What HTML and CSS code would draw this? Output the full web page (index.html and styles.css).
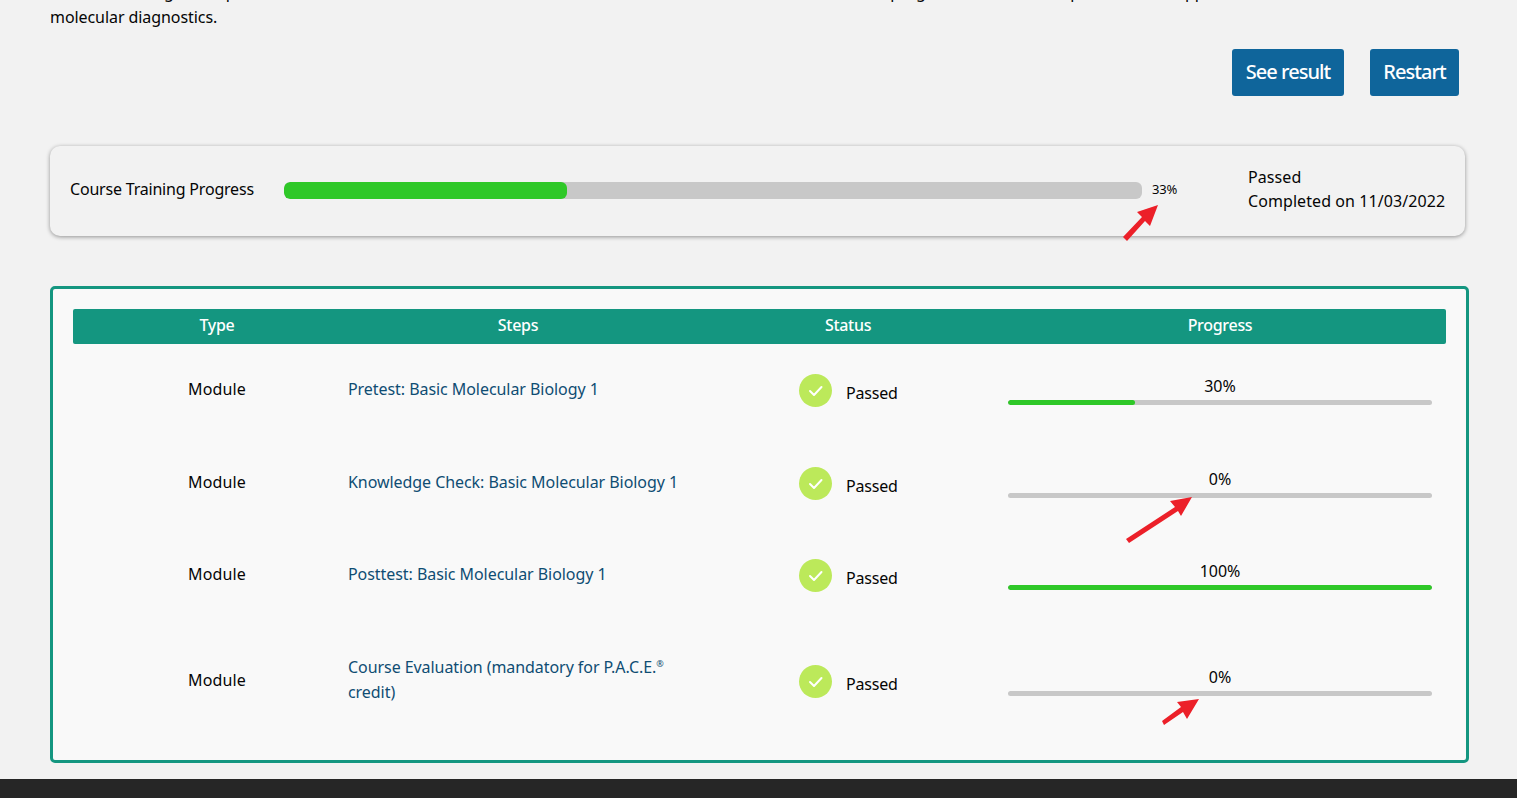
FILE: index.html
```html
<!DOCTYPE html>
<html lang="en">
<head>
<meta charset="utf-8">
<title>Course Training Progress</title>
<link rel="stylesheet" href="styles.css">
</head>
<body>
<main class="page">
  <p class="intro">This unit is designed to present the molecular basis and central roles of this cell in health and disease, the role of prognosis, and a role of potential new applications within the field of<br>molecular diagnostics.</p>
  <div class="actions">
    <a class="btn btn-result">See result</a>
    <a class="btn btn-restart">Restart</a>
  </div>
  <section class="summary">
    <div class="summary-label">Course Training Progress</div>
    <div class="summary-track"><div class="summary-fill" style="width:33%"></div></div>
    <div class="summary-pct">33%</div>
    <div class="summary-status">Passed<br>Completed on 11/03/2022</div>
  </section>
  <section class="steps">
    <div class="steps-head">
      <div class="col-center">Type</div>
      <div class="col-center">Steps</div>
      <div class="col-center">Status</div>
      <div class="col-center">Progress</div>
    </div>
    <div class="row row-a">
      <div class="col-type">Module</div>
      <a class="step-link">Pretest: Basic Molecular Biology 1</a>
      <div class="status"><svg class="check" viewBox="0 0 33 33"><circle cx="16.5" cy="16.5" r="16.5"/><path d="M11 17l4 4 7.500-8"/></svg><span class="status-text">Passed</span></div>
      <div class="prog"><div class="prog-pct">30%</div><div class="prog-track"><div class="prog-fill" style="width:30%"></div></div></div>
    </div>
    <div class="row row-b">
      <div class="col-type">Module</div>
      <a class="step-link">Knowledge Check: Basic Molecular Biology 1</a>
      <div class="status"><svg class="check" viewBox="0 0 33 33"><circle cx="16.5" cy="16.5" r="16.5"/><path d="M11 17l4 4 7.500-8"/></svg><span class="status-text">Passed</span></div>
      <div class="prog"><div class="prog-pct">0%</div><div class="prog-track"><div class="prog-fill" style="width:0%"></div></div></div>
    </div>
    <div class="row row-c">
      <div class="col-type">Module</div>
      <a class="step-link">Posttest: Basic Molecular Biology 1</a>
      <div class="status"><svg class="check" viewBox="0 0 33 33"><circle cx="16.5" cy="16.5" r="16.5"/><path d="M11 17l4 4 7.500-8"/></svg><span class="status-text">Passed</span></div>
      <div class="prog"><div class="prog-pct">100%</div><div class="prog-track"><div class="prog-fill" style="width:100%"></div></div></div>
    </div>
    <div class="row row-d">
      <div class="col-type">Module</div>
      <a class="step-link">Course Evaluation (mandatory for P.A.C.E.<sup class="reg">®</sup> credit)</a>
      <div class="status"><svg class="check" viewBox="0 0 33 33"><circle cx="16.5" cy="16.5" r="16.5"/><path d="M11 17l4 4 7.500-8"/></svg><span class="status-text">Passed</span></div>
      <div class="prog"><div class="prog-pct">0%</div><div class="prog-track"><div class="prog-fill" style="width:0%"></div></div></div>
    </div>
  </section>
</main>
<footer class="footer"></footer>
<svg class="annotations" viewBox="0 0 1517 798" aria-hidden="true">
  <polygon points="1158,205 1150,226 1145,221 1127,241 1123,237 1142,217 1137,212"/>
  <polygon points="1192,497 1181,516 1178,511 1129,543 1126,539 1175,507 1170,501"/>
  <polygon points="1199,699 1187,719 1183,712 1164,725 1162,721 1181,707 1177,702"/>
</svg>
</body>
</html>
```
FILE: styles.css
```css
* { box-sizing: border-box; }
html, body { height: 798px; overflow: hidden; }
body {
  margin: 0;
  position: relative;
  background: #f2f2f2;
  color: #050505;
  font-family: "Noto Sans", "Open Sans", sans-serif;
  font-size: 16px;
  letter-spacing: -0.05px;
  line-height: 25px;
}
.page { display: flow-root; padding-left: 50px; padding-right: 48px; height: 779px; }
.intro {
  margin: -20px 0 0;
  white-space: nowrap;
  letter-spacing: -0.07px;
}
.actions {
  display: flex;
  justify-content: flex-end;
  gap: 26px;
  margin-top: 19px;
  padding-right: 10px;
}
.btn {
  display: block;
  width: 112px;
  height: 47px;
  line-height: 45px;
  text-align: center;
  border-radius: 3px;
  background: #0f659b;
  color: #fff;
  font-size: 20px;
  font-weight: 500;
  letter-spacing: -0.95px;
}
.btn-restart { width: 89px; }
.summary {
  display: flex;
  align-items: center;
  width: 1415px;
  height: 90px;
  margin-top: 50px;
  padding: 0 20px;
  border-radius: 10px;
  background: #f2f2f2;
  box-shadow: 0 1px 4px rgba(0, 0, 0, .4);
}
.summary-label { width: 214px; flex: none; margin-top: -4px; letter-spacing: -0.2px; }
.summary-track {
  width: 858px;
  height: 17px;
  flex: none;
  margin-top: -2px;
  border-radius: 6px;
  overflow: hidden;
  background: #c8c8c8;
}
.summary-fill { height: 100%; background: #2fc828; border-radius: 6px; }
.summary-pct { width: 106px; flex: none; padding-left: 10px; font-size: 13px; letter-spacing: -0.2px; margin-top: -4px; }
.summary-status { white-space: nowrap; line-height: 24px; margin-top: -4px; letter-spacing: 0.08px; }
.steps {
  width: 1419px;
  height: 477px;
  margin-top: 50px;
  padding: 20px 20px 0;
  border: 3px solid #149680;
  border-radius: 5px;
  background: #f9f9f9;
}
.steps-head, .row {
  display: grid;
  grid-template-columns: 262px 340px 320px 424px;
  padding: 0 14px 0 13px;
}
.steps-head {
  height: 35px;
  padding-bottom: 2px;
  align-items: center;
  border-radius: 2px;
  background: #149680;
  color: #fff;
  font-weight: 500;
  letter-spacing: -0.3px;
}
.col-center { text-align: center; }
.col-type { text-align: center; letter-spacing: 0.15px; }
.row { align-items: center; padding-top: 27px; padding-bottom: 28px; }
.row-a { margin-bottom: 1px; }
.row-c { margin-bottom: 7px; }
.step-link { color: #0f4d73; letter-spacing: -0.06px; }
.reg { font-size: 9px; line-height: 0; vertical-align: 6px; }
.status { display: flex; align-items: center; min-height: 37px; padding-top: 2px; padding-left: 111px; }
.check { width: 33px; height: 33px; flex: none; }
.check circle { fill: #bce95a; }
.check path { fill: none; stroke: #fff; stroke-width: 2; stroke-linecap: round; stroke-linejoin: round; }
.status-text { margin-left: 14px; margin-top: 6px; letter-spacing: -0.2px; }
.prog-pct { text-align: center; line-height: 24px; }
.prog-track { height: 5px; margin-top: 2px; border-radius: 3px; background: #c8c8c8; overflow: hidden; }
.prog-fill { height: 100%; border-radius: 3px; background: #2fc828; }
.footer { height: 19px; background: #262626; }
.annotations { position: absolute; left: 0; top: 0; width: 1517px; height: 798px; pointer-events: none; }
.annotations polygon { fill: #ec2029; }
```
